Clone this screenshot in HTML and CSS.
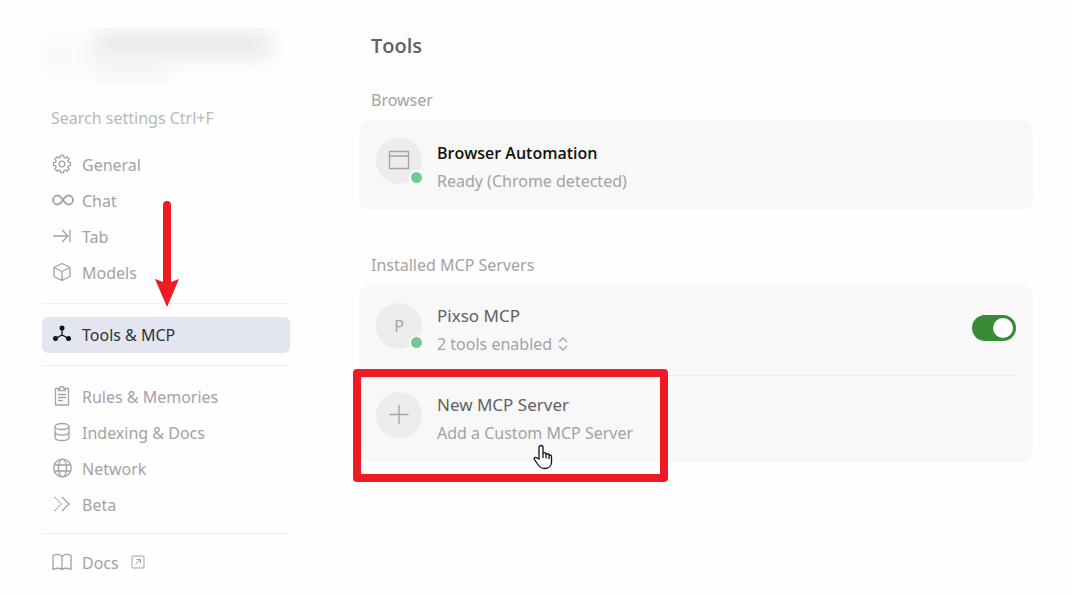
FILE: index.html
```html
<!DOCTYPE html>
<html lang="en">
<head>
    <meta charset="UTF-8">
    <meta name="viewport" content="width=device-width, initial-scale=1.0">
    <title>Settings - Tools</title>
    <link rel="stylesheet" href="styles.css">
</head>
<body>
    <div class="settings">
        <aside class="sidebar">
            <div class="account">
                <div class="avatar-blur"></div>
                <div class="account-blur">
                    <div class="name-blur"></div>
                    <div class="plan-blur"></div>
                </div>
            </div>
            <input class="search" type="text" aria-label="Search settings" placeholder="Search settings Ctrl+F">

            <nav>
                <div class="group">
                    <a class="item" href="#general">
                        <svg viewBox="0 0 20 20"><path d="M8.500 1.500h3l.4 2.100 1.300.5 1.800-1.200 2.100 2.100-1.200 1.800.5 1.300 2.100.4v3l-2.100.4-.5 1.300 1.200 1.800-2.100 2.100-1.800-1.200-1.300.5-.4 2.100h-3l-.4-2.100-1.300-.5-1.800 1.200-2.100-2.100 1.200-1.800-.5-1.300-2.100-.4v-3l2.100-.4.5-1.300-1.200-1.800 2.100-2.100 1.800 1.200 1.300-.5z"/><circle cx="10" cy="10" r="2.800"/></svg>
                        <span>General</span>
                    </a>
                    <a class="item" href="#chat">
                        <svg class="wide" viewBox="0 0 22 20"><path d="M11 10C9 7 7.500 5.500 5.500 5.500a4.500 4.500 0 0 0 0 9C7.500 14.500 9 13 11 10s3.500-4.500 5.500-4.500a4.500 4.500 0 0 1 0 9C14.500 14.500 13 13 11 10z"/></svg>
                        <span>Chat</span>
                    </a>
                    <a class="item" href="#tab">
                        <svg viewBox="0 0 20 20"><path d="M1 10h15M10 4l6 6-6 6M18 3.500v13"/></svg>
                        <span>Tab</span>
                    </a>
                    <a class="item" href="#models">
                        <svg viewBox="0 0 20 20"><path stroke-linejoin="round" d="M10 1.500l8 4v9L10 18.500l-8-4v-9zM2 5.500l8 4 8-4M10 9.500v9"/></svg>
                        <span>Models</span>
                    </a>
                </div>
                <div class="group">
                    <a class="item active" href="#tools">
                        <svg viewBox="0 0 20 20"><path d="M10 3.500v7.500M3.500 14.500L10 11l6.500 3.500"/><g class="solid"><circle cx="10" cy="4" r="2.500"/><circle cx="3.500" cy="14.500" r="2.500"/><circle cx="16.500" cy="14.500" r="2.500"/></g></svg>
                        <span>Tools &amp; MCP</span>
                    </a>
                </div>
                <div class="group">
                    <a class="item" href="#rules">
                        <svg viewBox="0 0 20 20"><path stroke-linejoin="round" d="M6.500 2.500H3.500V19h13V2.500h-3M6.500 4.500v-2H8a2 2 0 0 1 4 0h1.500v2zM6 8.500h8M6 11.500h8M6 14.500h5"/></svg>
                        <span>Rules &amp; Memories</span>
                    </a>
                    <a class="item" href="#indexing">
                        <svg viewBox="0 0 20 20"><ellipse cx="10" cy="4.500" rx="7" ry="3"/><path d="M3 4.500v11c0 1.700 3 3 7 3s7-1.300 7-3v-11M3 10c0 1.700 3 3 7 3s7-1.300 7-3"/></svg>
                        <span>Indexing &amp; Docs</span>
                    </a>
                    <a class="item" href="#network">
                        <svg viewBox="0 0 20 20"><circle cx="10.500" cy="10" r="8.800"/><ellipse cx="10.500" cy="10" rx="4" ry="8.800"/><path d="M2.500 7h16M2.500 13h16"/></svg>
                        <span>Network</span>
                    </a>
                    <a class="item" href="#beta">
                        <svg viewBox="0 0 20 20"><path d="M10 3l7 7-7 7"/><path stroke-dasharray="2 1" d="M2.500 3l7 7-7 7"/></svg>
                        <span>Beta</span>
                    </a>
                </div>
                <div class="group">
                    <a class="item" href="#docs">
                        <svg viewBox="0 0 20 20"><path stroke-linejoin="round" d="M10 4.500C8 2 4 2 1 3.500v14c3-1.500 6.500-1.500 9 0 2.500-1.500 6-1.500 9 0v-14C16 2 12 2 10 4.500zM10 4.500v13"/></svg>
                        <span>Docs</span>
                        <svg class="external" viewBox="0 0 14 14"><rect x="1" y="1" width="12" height="12" rx="1"/><path d="M4.500 9.500l5-5M5.500 4.500h4v4"/></svg>
                    </a>
                </div>
            </nav>
            <svg class="arrow" viewBox="0 0 24 106"><path d="M12 0a4 4 0 0 1 4 4v77l8-3-12 28L0 78l8 3V4a4 4 0 0 1 4-4z"/></svg>
        </aside>

        <main class="content">
            <h1>Tools</h1>

            <h2>Browser</h2>
            <section class="card">
                <div class="row first">
                    <div class="badge">
                        <svg viewBox="0 0 22 22"><path d="M1.500 1.500h19v17h-19zM1.500 6h19"/></svg>
                        <i class="dot"></i>
                    </div>
                    <div class="text">
                        <h3 class="strong">Browser Automation</h3>
                        <p>Ready (Chrome detected)</p>
                    </div>
                </div>
            </section>

            <h2>Installed MCP Servers</h2>
            <section class="card">
                <div class="row">
                    <div class="badge">P<i class="dot"></i></div>
                    <div class="text">
                        <h3>Pixso MCP</h3>
                        <p>2 tools enabled <svg class="updown" viewBox="0 0 10 14"><path d="M1 5l4-4 4 4M1 9l4 4 4-4"/></svg></p>
                    </div>
                    <input class="toggle" type="checkbox" role="switch" aria-label="Enable Pixso MCP" checked>
                </div>
                <div class="row">
                    <div class="badge">
                        <svg viewBox="0 0 22 22"><path d="M11 1v19M1.500 10.500h19"/></svg>
                    </div>
                    <div class="text">
                        <h3>New MCP Server</h3>
                        <p>Add a Custom MCP Server</p>
                    </div>
                    <div class="highlight"></div>
                    <svg class="cursor" viewBox="0 0 20 26"><path d="M6 15V3.500a2 2 0 0 1 4 0V10c0-2 3-1.800 3 0v1c0-1.800 3-1.500 3 0v1c0-1.500 2.500-1.300 2.500.5V18c0 4-3 6.500-7 6.500-3.500 0-5-1.500-7-4.500l-3-4.500c-1-1.500 1-3 2.500-1.500zM10 10v4M13 11v3.500M16 12v3"/></svg>
                </div>
            </section>
        </main>
    </div>
</body>
</html>
```
FILE: styles.css
```css
* {
    box-sizing: border-box;
}

body {
    margin: 0;
    background: #fefefe;
    color: #616161;
    font-family: "Noto Sans", "Open Sans", sans-serif;
    font-size: 16px;
    line-height: 24px;
}

h1, h2, h3, p {
    margin: 0;
}

svg {
    fill: none;
    stroke: currentColor;
    stroke-width: 1.3;
    flex: none;
}

.settings {
    display: flex;
    gap: 69px;
    padding: 28px 39px 0 42px;
}

/* sidebar */
.sidebar {
    position: relative;
    width: 248px;
    flex: none;
}

.account {
    display: flex;
    gap: 16px;
    height: 57px;
    overflow: hidden;
}

.avatar-blur {
    width: 36px;
    height: 40px;
    margin-top: 8px;
    background: #f9f9f9;
    filter: blur(10px);
}

.account-blur {
    flex: 1;
    padding-top: 6px;
}

.name-blur {
    width: 176px;
    height: 22px;
    background: #e5e5e5;
    filter: blur(10px);
}

.plan-blur {
    width: 76px;
    height: 22px;
    background: #f3f3f3;
    filter: blur(10px);
}

.search {
    display: block;
    width: 100%;
    height: 32px;
    margin: 17px 0 13px;
    padding: 0 9px;
    border: 0;
    background: none;
    font: inherit;
    color: #616161;
}

.search::placeholder {
    color: #b9b9b9;
    opacity: 1;
}

.group + .group {
    margin-top: 12px;
    padding-top: 13px;
    border-top: 1px solid #f0f0f0;
}

.group:last-child {
    margin-top: 10px;
    padding-top: 11px;
}

.item {
    display: flex;
    align-items: center;
    gap: 10px;
    height: 36px;
    padding: 0 10px;
    border-radius: 6px;
    color: #a3a3a3;
    text-decoration: none;
}

.item svg {
    width: 20px;
    height: 20px;
    margin-bottom: 3px;
}

.item .wide {
    width: 22px;
    margin-right: -2px;
    stroke-width: 1.8;
}

.item .external {
    width: 14px;
    height: 14px;
    margin-left: 2px;
    stroke-width: 1;
}

.item .solid {
    fill: currentColor;
    stroke: none;
}

.active {
    background: #e3e5f1;
    color: #333;
}

.active svg {
    color: #111;
}

.arrow {
    position: absolute;
    left: 113px;
    top: 173px;
    width: 24px;
    height: 106px;
    fill: #ed1c24;
    stroke: none;
}

/* content */
.content {
    flex: 1;
    padding-top: 4px;
}

h1 {
    padding-left: 12px;
    font-family: "Open Sans", "Noto Sans", sans-serif;
    font-size: 20px;
    line-height: 28px;
    font-weight: 600;
}

h2 {
    margin-top: 28px;
    padding-left: 12px;
    color: #a3a3a3;
    font-size: 16px;
    font-weight: 400;
}

.card {
    margin-top: 8px;
    padding: 0 17px;
    border-radius: 12px;
    background: #f8f8f8;
}

.card + h2 {
    margin-top: 43px;
}

.row {
    position: relative;
    display: flex;
    align-items: center;
    gap: 15px;
    height: 90px;
}

.row + .row {
    height: 87px;
    border-top: 1px solid #ececec;
}

.badge {
    position: relative;
    display: flex;
    align-items: center;
    justify-content: center;
    width: 46px;
    height: 46px;
    margin-bottom: 8px;
    border-radius: 50%;
    background: #ececec;
    color: #a3a3a3;
}

.badge svg {
    width: 22px;
    height: 22px;
}

.dot {
    position: absolute;
    right: -2px;
    bottom: -1px;
    width: 15px;
    height: 15px;
    border: 2px solid #fff;
    border-radius: 50%;
    background: #73c991;
}

.text {
    flex: 1;
}

.first .text {
    padding-top: 3px;
}

h3 {
    font-size: 17px;
    font-weight: 400;
    line-height: 28px;
}

.strong {
    color: #111;
    font-family: "Open Sans", "Noto Sans", sans-serif;
    font-size: 16px;
    font-weight: 600;
}

p {
    color: #a3a3a3;
    line-height: 28px;
}

.updown {
    width: 10px;
    height: 14px;
    margin-left: 2px;
    vertical-align: -1px;
}

.toggle {
    appearance: none;
    width: 44px;
    height: 26px;
    margin: 0 0 4px;
    padding: 3px;
    border-radius: 13px;
    background: #388a34;
}

.toggle::before {
    content: "";
    display: block;
    width: 20px;
    height: 20px;
    margin-left: auto;
    border-radius: 50%;
    background: #fff;
}

.highlight {
    position: absolute;
    left: -23px;
    top: -7px;
    width: 315px;
    height: 113px;
    border: 8px solid #ed1c24;
    border-radius: 4px;
}

.cursor {
    position: absolute;
    left: 157px;
    top: 68px;
    width: 20px;
    height: 26px;
    fill: #fff;
    stroke: #111122;
}
```
